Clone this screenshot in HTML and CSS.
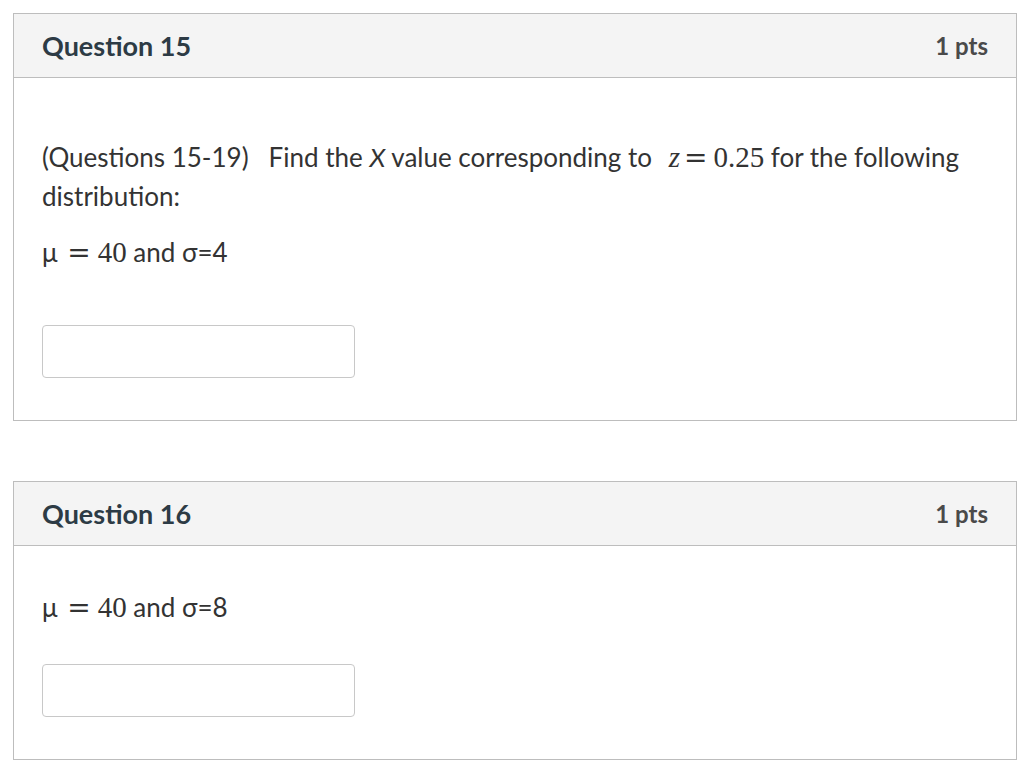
FILE: index.html
```html
<!DOCTYPE html>
<html>
<head>
<meta charset="utf-8">
<link rel="stylesheet" href="styles.css">
</head>
<body>
<div class="quiz">
  <section class="question">
    <header class="q-header">
      <h2 class="q-title">Question 15</h2>
      <span class="q-pts">1 pts</span>
    </header>
    <div class="q-body q-body-first">
      <p class="q-text">(Questions 15-19)&nbsp;&nbsp; Find the <em>X</em> value corresponding to <span class="math math-gap"><i class="var">z</i><span class="op op-tight">=</span><span class="num">0.25</span></span> for the following <span class="word">distribution:</span></p>
      <p class="q-text">μ <span class="math"><span class="op">=</span><span class="num">40</span></span> and σ=4</p>
      <input class="answer answer-far" type="text">
    </div>
  </section>
  <section class="question">
    <header class="q-header">
      <h2 class="q-title">Question 16</h2>
      <span class="q-pts">1 pts</span>
    </header>
    <div class="q-body">
      <p class="q-text">μ <span class="math"><span class="op">=</span><span class="num">40</span></span> and σ=8</p>
      <input class="answer" type="text">
    </div>
  </section>
</div>
</body>
</html>
```
FILE: styles.css
```css
html, body {
  margin: 0;
  padding: 0;
  background: #ffffff;
}
body {
  font-family: Lato, "Liberation Sans", sans-serif;
  color: #2d3b45;
}
.quiz {
  padding: 13px 7px 0 13px;
  display: flex;
  flex-direction: column;
  gap: 60px;
}
.question {
  border: 1.5px solid #bdbdbd;
  background: #fff;
}
.q-header {
  height: 63px;
  background: #f4f4f4;
  border-bottom: 1.5px solid #bdbdbd;
  display: flex;
  align-items: center;
  justify-content: space-between;
  padding: 0 28px 0 28px;
}
.q-title {
  margin: 0;
  font-size: 27px;
  font-weight: 700;
  color: #2d3b45;
}
.q-pts {
  font-size: 24px;
  font-weight: 700;
  color: #4a4a4a;
}
.q-body {
  padding: 42px 28px 42px 28px;
}
.q-body-first {
  padding-top: 60px;
}
.q-text {
  margin: 0 0 17px 0;
  font-size: 26px;
  line-height: 39px;
  color: #333;
}
.q-text em {
  font-style: italic;
}
.word {
  white-space: nowrap;
}
.math {
  font-family: "Liberation Serif", "Times New Roman", serif;
  font-size: 29px;
}
.math-gap {
  margin-left: 10px;
}
.var {
  font-family: "Liberation Serif", "Times New Roman", serif;
  font-style: italic;
}
.num {
  font-family: "Liberation Serif", "Times New Roman", serif;
}
.op {
  font-family: "DejaVu Serif", "Liberation Serif", serif;
  font-size: 28px;
  margin: 0 7px 0 3px;
}
.op-tight {
  margin-left: 4px;
  margin-right: 6px;
}
.answer {
  display: block;
  margin-top: 37px;
  width: 313px;
  height: 53px;
  box-sizing: border-box;
  border: 1.5px solid #c8c8c8;
  border-radius: 4px;
  background: #fff;
}
.answer-far {
  margin-top: 53px;
}
```
